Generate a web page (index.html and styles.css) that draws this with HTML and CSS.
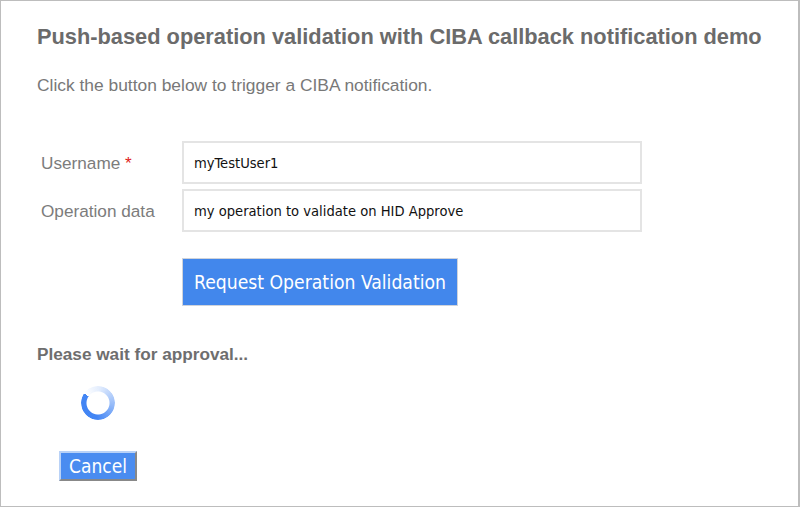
FILE: index.html
```html
<!DOCTYPE html>
<html lang="en">
<head>
<meta charset="utf-8">
<title>CIBA callback notification demo</title>
<link rel="stylesheet" href="styles.css">
</head>
<body>
<div class="frame">
  <h1 class="title">Push-based operation validation with CIBA callback notification demo</h1>
  <p class="intro">Click the button below to trigger a CIBA notification.</p>
  <form class="form">
    <label class="label" for="user">Username <span class="req">*</span></label>
    <input class="field" id="user" type="text" value="myTestUser1">
    <label class="label" for="op">Operation data</label>
    <input class="field" id="op" type="text" value="my operation to validate on HID Approve">
    <div class="actions">
      <button class="primary" type="button">Request Operation Validation</button>
    </div>
  </form>
  <p class="wait">Please wait for approval...</p>
  <div class="spinner"></div>
  <button class="cancel" type="button">Cancel</button>
</div>
</body>
</html>
```
FILE: styles.css
```css
html, body {
  margin: 0;
  padding: 0;
  background: #ffffff;
}
.frame {
  box-sizing: border-box;
  width: 800px;
  height: 507px;
  border: 1px solid #bdbdbd;
  border-right-width: 2px;
  padding: 24px 0 0 36px;
  font-family: "Liberation Sans", Arial, sans-serif;
  color: #777777;
}
.title {
  margin: 0;
  font-size: 21.8px;
  line-height: 24px;
  font-weight: 700;
  color: #6b6b6b;
}
.intro {
  margin: 26px 0 0 0;
  font-size: 17.4px;
  line-height: 20px;
  color: #787878;
}
.form {
  margin-top: 46px;
  display: grid;
  grid-template-columns: 145px 460px;
  row-gap: 5px;
  align-items: center;
}
.label {
  padding-left: 4px;
  font-size: 17.2px;
  line-height: 20px;
  color: #7c7c7c;
}
.req {
  color: #e02020;
}
.field {
  box-sizing: border-box;
  width: 460px;
  height: 43px;
  margin: 0;
  border: 2px solid #e4e4e4;
  padding: 0 0 0 10px;
  font-family: "DejaVu Sans", sans-serif;
  font-stretch: condensed;
  font-size: 14.6px;
  color: #111111;
  background: #ffffff;
  outline: none;
}
.actions {
  grid-column: 2;
  padding-top: 21px;
}
.primary {
  box-sizing: border-box;
  width: 276px;
  height: 48px;
  margin: 0;
  border: 1px solid #cfd3da;
  background: #4287ec;
  color: #ffffff;
  font-family: "DejaVu Sans", sans-serif;
  font-stretch: condensed;
  font-size: 19.2px;
  padding: 0;
  cursor: pointer;
}
.wait {
  margin: 39px 0 0 0;
  font-size: 17.2px;
  line-height: 18px;
  font-weight: 700;
  color: #6e6e6e;
}
.spinner {
  width: 34px;
  height: 34px;
  margin: 23px 0 0 44px;
  border-radius: 50%;
  background: conic-gradient(from 305deg,
    rgba(66, 133, 244, 0) 0deg,
    rgba(66, 133, 244, 0.15) 60deg,
    rgba(66, 133, 244, 0.55) 150deg,
    rgba(66, 133, 244, 1) 240deg,
    rgba(66, 133, 244, 1) 360deg);
  -webkit-mask: radial-gradient(circle, transparent 11px, #000 12px);
  mask: radial-gradient(circle, transparent 11px, #000 12px);
}
.cancel {
  display: block;
  box-sizing: border-box;
  width: 78px;
  height: 30px;
  margin: 31px 0 0 22px;
  padding: 0;
  border: 2px solid;
  border-color: #b9d2f7 #888888 #888888 #b9d2f7;
  background: #4a8cf0;
  color: #ffffff;
  font-family: "DejaVu Sans", sans-serif;
  font-stretch: condensed;
  font-size: 19px;
  line-height: 24px;
  cursor: pointer;
}
```
